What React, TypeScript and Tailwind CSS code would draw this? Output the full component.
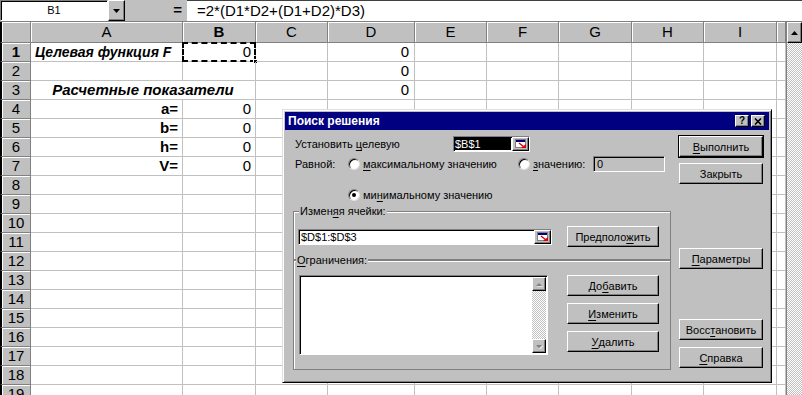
import type { ReactNode } from "react";

const COLS = ["A", "B", "C", "D", "E", "F", "G", "H", "I", ""];
const ROWS = Array.from({ length: 19 }, (_, i) => i + 1);

type CellDef = { text: string; className?: string };

const CELLS: Record<string, CellDef> = {
  A1: { text: "Целевая функция F", className: "font-bold italic justify-start pl-[4px] text-[14px]" },
  B1: { text: "0", className: "justify-end pr-[4px]" },
  D1: { text: "0", className: "justify-end pr-[5px]" },
  D2: { text: "0", className: "justify-end pr-[5px]" },
  D3: { text: "0", className: "justify-end pr-[5px]" },
  A3: { text: "Расчетные показатели", className: "font-bold italic justify-center col-span-2" },
  A4: { text: "a=", className: "font-bold justify-end pr-[4px]" },
  A5: { text: "b=", className: "font-bold justify-end pr-[4px]" },
  A6: { text: "h=", className: "font-bold justify-end pr-[4px]" },
  A7: { text: "V=", className: "font-bold justify-end pr-[4px]" },
  B4: { text: "0", className: "justify-end pr-[4px]" },
  B5: { text: "0", className: "justify-end pr-[4px]" },
  B6: { text: "0", className: "justify-end pr-[4px]" },
  B7: { text: "0", className: "justify-end pr-[4px]" },
};

const raised =
  "bg-[#c0c0c0] border border-t-white border-l-white border-r-black border-b-black shadow-[inset_-1px_-1px_0_#808080]";
const sunken =
  "border border-t-[#808080] border-l-[#808080] border-b-white border-r-white shadow-[inset_1px_1px_0_#000]";
const dither =
  "bg-[image:repeating-conic-gradient(#c0c0c0_0%_25%,#ffffff_0%_50%)] bg-[length:2px_2px]";

function FormulaBar() {
  return (
    <div className="flex h-[22px] bg-[#c0c0c0] border-b border-[#808080]">
      <div className={`w-[108px] bg-white ${sunken} flex items-center justify-center text-[11px]`}>B1</div>
      <div className={`w-[17px] ${raised} flex items-center justify-center`}>
        <svg width="7" height="4" viewBox="0 0 7 4">
          <path d="M0 0h7L3.5 4z" fill="#000" />
        </svg>
      </div>
      <div className="w-[62px] flex items-center justify-end pr-[5px] font-bold text-[15px]">=</div>
      <div className="flex-1 bg-white border-t border-[#404040] flex items-center pl-[10px] text-[15px]">
        =2*(D1*D2+(D1+D2)*D3)
      </div>
    </div>
  );
}

function Sheet() {
  return (
    <div className="grid grid-cols-[31px_152px_73px_72px_87px_72px_72px_73px_72px_73px_9px] auto-rows-[19px] grid-rows-[21px] text-[15px]">
      <div className="bg-[#c0c0c0] border-l-2 border-l-black border-r border-b border-[#808080] shadow-[inset_1px_1px_0_#fff]" />
      {COLS.map((c) => (
        <div
          key={"h" + c}
          className={`bg-[#c0c0c0] border-r border-b border-[#808080] shadow-[inset_1px_1px_0_#fff] flex items-center justify-center ${
            c === "B" ? "font-bold" : ""
          }`}
        >
          {c}
        </div>
      ))}
      {ROWS.map((n) => [
        <div
          key={"r" + n}
          className={`bg-[#c0c0c0] border-l-2 border-l-black border-r border-b border-[#808080] shadow-[inset_1px_1px_0_#fff] flex items-center justify-center ${
            n === 1 ? "font-bold" : ""
          }`}
        >
          {n}
        </div>,
        ...COLS.filter((c) => !(n === 3 && c === "B")).map((c) => {
          const def = CELLS[c + n];
          return (
            <div
              key={c + n + "-" + n}
              className={`relative flex items-center whitespace-nowrap border-r border-b border-[#c0c0c0] ${def?.className ?? ""}`}
            >
              {def?.text}
              {c === "B" && n === 1 && (
                <>
                  <div className="absolute -left-px -top-px w-[74px] h-[20px] border-2 border-dashed border-black" />
                  <div className="absolute right-[-3px] bottom-[-3px] w-[5px] h-[5px] bg-black border border-white" />
                </>
              )}
            </div>
          );
        }),
      ])}
    </div>
  );
}

function SheetScroll() {
  return (
    <div className="w-[16px] flex flex-col border-l border-[#808080]">
      <div className={`h-[21px] ${raised} flex items-center justify-center`}>
        <svg width="7" height="4" viewBox="0 0 7 4">
          <path d="M0 4h7L3.5 0z" fill="#000" />
        </svg>
      </div>
      <div className={`flex-1 ${dither}`} />
    </div>
  );
}

function RangeIcon() {
  return (
    <div className={`w-[17px] h-[14px] ${raised} flex items-center justify-center shrink-0`}>
      <svg width="12" height="10" viewBox="0 0 12 10">
        <rect x="0.5" y="0.5" width="10" height="8" fill="#fff" stroke="#808080" />
        <rect x="1" y="1" width="9" height="2" fill="#000080" />
        <path d="M4 4l5 4" stroke="#e00000" strokeWidth="1.5" />
        <path d="M6 9h5V5z" fill="#e00000" />
      </svg>
    </div>
  );
}

function Radio({ checked }: { checked?: boolean }) {
  return (
    <span className="w-[12px] h-[12px] rounded-full bg-white border border-t-[#808080] border-l-[#808080] border-r-[#dfdfdf] border-b-[#dfdfdf] shadow-[inset_1px_1px_0_#000] flex items-center justify-center shrink-0">
      {checked && <span className="w-[4px] h-[4px] rounded-full bg-black" />}
    </span>
  );
}

function U({ children }: { children: ReactNode }) {
  return <span className="underline underline-offset-2">{children}</span>;
}

function Btn({ children, className = "", isDefault }: { children: ReactNode; className?: string; isDefault?: boolean }) {
  return (
    <button
      type="button"
      className={`h-[21px] ${raised} flex items-center justify-center text-[11px] ${
        isDefault ? "outline outline-1 outline-black" : ""
      } ${className}`}
    >
      {children}
    </button>
  );
}

function Arrow({ up }: { up?: boolean }) {
  return (
    <div className={`h-[14px] ${raised} flex items-center justify-center`}>
      <svg width="8" height="5" viewBox="0 0 8 5">
        <path d={up ? "M1 4h6L4 1z" : "M1 1h6L4 4z"} fill="#808080" />
        <path d={up ? "M2 5h6" : "M4.5 5L8 1.5"} stroke="#fff" strokeWidth="1" />
      </svg>
    </div>
  );
}

function SolverDialog() {
  return (
    <div className="absolute left-[282px] top-[109px] w-[490px] h-[274px] bg-[#c0c0c0] border border-t-[#dfdfdf] border-l-[#dfdfdf] border-r-black border-b-black shadow-[inset_1px_1px_0_#fff,inset_-1px_-1px_0_#808080] p-[2px] flex flex-col text-[11px] leading-[14px]">
      <div className="h-[18px] bg-[#000080] flex items-center pl-[3px] pr-[4px]">
        <span className="text-white font-bold text-[12px]">Поиск решения</span>
        <div className="ml-auto flex gap-[2px]">
          <div className={`w-[14px] h-[12px] ${raised} flex items-center justify-center text-[10px] font-bold leading-none`}>?</div>
          <div className={`w-[14px] h-[12px] ${raised} flex items-center justify-center`}>
            <svg width="8" height="7" viewBox="0 0 8 7">
              <path d="M1 0.5l6 6M7 0.5l-6 6" stroke="#000" strokeWidth="1.6" />
            </svg>
          </div>
        </div>
      </div>

      <div className="flex pt-[6px]">
        <div className="w-[394px] pl-[8px] flex flex-col">
          <div className="flex items-center h-[16px] pl-[2px]">
            <span className="w-[158px]">
              Установить <U>ц</U>елевую
            </span>
            <div className={`w-[77px] h-[16px] bg-white ${sunken} flex items-center pl-[1px]`}>
              <span className="bg-black text-white w-[56px] h-[12px] leading-[12px] text-[11px]">$B$1</span>
              <div className="ml-auto">
                <RangeIcon />
              </div>
            </div>
          </div>

          <div className="flex items-center h-[16px] mt-[4px] pl-[2px]">
            <span className="w-[53px]">Равной:</span>
            <div className="w-[170px] flex items-center gap-[3px]">
              <Radio />
              <span>
                <U>м</U>аксимальному значению
              </span>
            </div>
            <div className="w-[75px] flex items-center gap-[3px]">
              <Radio />
              <span>
                <U>з</U>начению:
              </span>
            </div>
            <div className={`w-[72px] h-[16px] ${sunken} flex items-center pl-[3px] text-[11px]`}>0</div>
          </div>

          <div className="flex items-center h-[16px] mt-[15px] pl-[55px] gap-[3px]">
            <Radio checked />
            <span>
              ми<U>н</U>имальному значению
            </span>
          </div>

          <div className="relative mt-[8px] w-[378px] border border-[#808080] shadow-[inset_1px_1px_0_#fff] pt-[14px] pb-[12px] pl-[4px] flex items-center gap-[15px]">
            <span className="absolute -top-[8px] left-[5px] bg-[#c0c0c0] px-[1px]">
              Измен<U>я</U>я ячейки:
            </span>
            <div className={`w-[254px] h-[16px] bg-white ${sunken} flex items-center pl-[2px]`}>
              <span>$D$1:$D$3</span>
              <div className="ml-auto">
                <RangeIcon />
              </div>
            </div>
            <Btn className="w-[92px]">
              Предполо<U>ж</U>ить
            </Btn>
          </div>

          <div className="relative w-[378px] border border-[#808080] shadow-[inset_1px_1px_0_#fff] pt-[14px] pb-[14px] pl-[5px] flex gap-[19px]">
            <span className="absolute -top-[8px] left-[2px] bg-[#c0c0c0] px-[1px]">
              <U>О</U>граничения:
            </span>
            <div className={`w-[249px] h-[80px] bg-white ${sunken} flex justify-end p-[1px]`}>
              <div className="w-[14px] flex flex-col">
                <Arrow up />
                <div className={`flex-1 ${dither}`} />
                <Arrow />
              </div>
            </div>
            <div className="flex flex-col gap-[7px]">
              <Btn className="w-[92px]">
                До<U>б</U>авить
              </Btn>
              <Btn className="w-[92px]">
                <U>И</U>зменить
              </Btn>
              <Btn className="w-[92px]">
                <U>У</U>далить
              </Btn>
            </div>
          </div>
        </div>

        <div className="flex flex-col w-[84px]">
          <Btn isDefault>
            <U>В</U>ыполнить
          </Btn>
          <Btn className="mt-[6px]">Закрыть</Btn>
          <Btn className="mt-[64px]">
            <U>П</U>араметры
          </Btn>
          <Btn className="mt-[50px]">
            Восс<U>т</U>ановить
          </Btn>
          <Btn className="mt-[7px]">
            <U>С</U>правка
          </Btn>
        </div>
      </div>
    </div>
  );
}

export default function App() {
  return (
    <div className="relative w-[802px] h-[395px] overflow-hidden bg-white text-black font-['Liberation_Sans',Arial,sans-serif]">
      <FormulaBar />
      <div className="flex">
        <Sheet />
        <SheetScroll />
      </div>
      <SolverDialog />
    </div>
  );
}
